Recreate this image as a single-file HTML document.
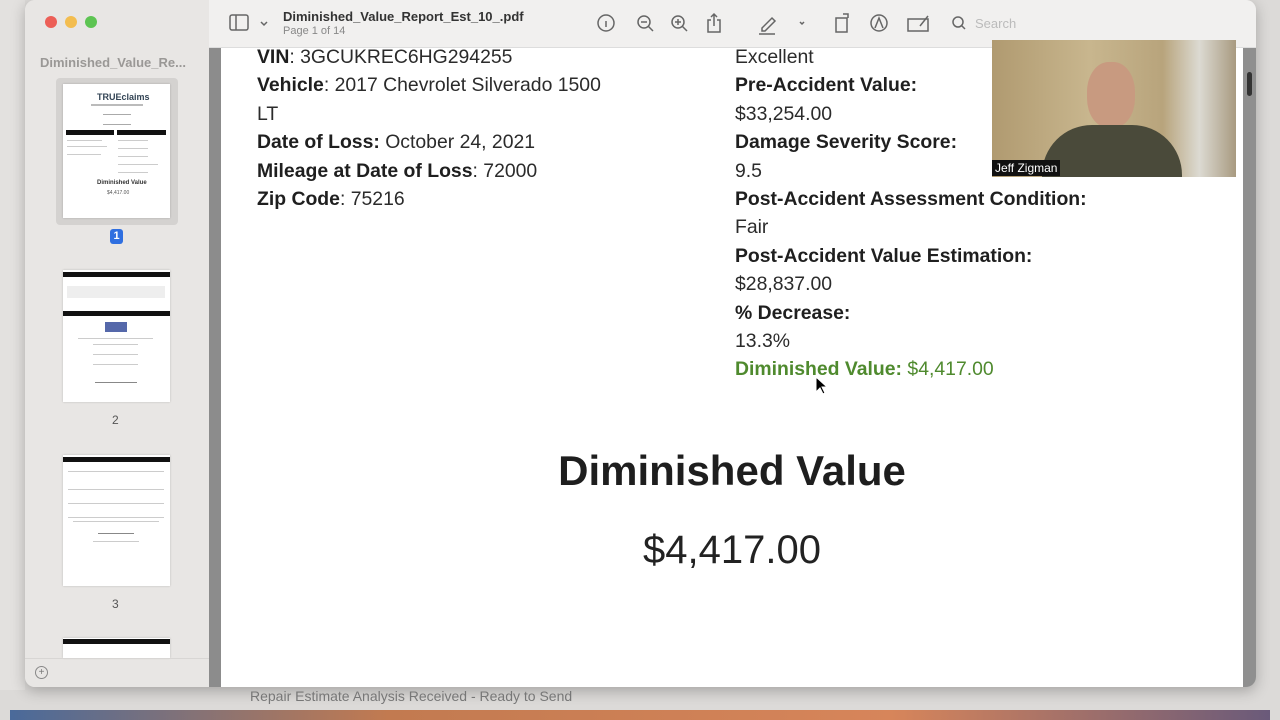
<!DOCTYPE html>
<html><head><meta charset="utf-8"><style>
*{margin:0;padding:0;box-sizing:border-box}
body{width:1280px;height:720px;overflow:hidden;background:#dcdad8;font-family:"Liberation Sans","DejaVu Sans",sans-serif;position:relative}
.abs{position:absolute}
.win{left:25px;top:0;width:1231px;height:687px;background:#e8e6e4;border-radius:10px;overflow:hidden;box-shadow:0 4px 14px rgba(0,0,0,.25)}
.tb{left:184px;top:0;width:1047px;height:48px;background:#f1f0ef;border-bottom:1px solid #ddd}
.side{left:0;top:0;width:184px;height:687px;background:#e8e6e4}
.strip{left:184px;top:48px;width:13px;height:639px;background:#8c8c8c}
.page{left:196px;top:48px;width:1022px;height:639px;background:#fff}
.sb{left:1218px;top:48px;width:13px;height:639px;background:#8f8f8f}
.doc{font-size:19.4px;color:#2b2b2b;line-height:28.4px}
.doc b{color:#1f1f1f}
.th{background:#fff;box-shadow:0 0 2px rgba(0,0,0,.2)}
.bar{background:#111;height:5px;position:absolute}
.ln{background:#ccc;height:1px;position:absolute}
.ic{stroke:#666;fill:none;stroke-width:1.5}
</style></head><body>
<div class="abs" style="left:0;top:0;width:25px;height:690px;background:#e3e1df"></div>
<div class="abs win">
  <div class="abs side">
    <div class="abs" style="left:20px;top:16px;width:12px;height:12px;border-radius:50%;background:#ec5f57"></div>
    <div class="abs" style="left:40px;top:16px;width:12px;height:12px;border-radius:50%;background:#f3bd4f"></div>
    <div class="abs" style="left:60px;top:16px;width:12px;height:12px;border-radius:50%;background:#5dc452"></div>
    <div class="abs" style="left:15px;top:55px;font-size:13px;font-weight:bold;color:#9a9896">Diminished_Value_Re...</div>
    <div class="abs" style="left:31px;top:78px;width:122px;height:147px;background:#d4d2d0;border-radius:4px"></div>
    <div class="abs th" style="left:38px;top:84px;width:107px;height:134px">
      <div class="abs" style="left:34px;top:8px;font-size:9px;font-weight:bold;color:#345">TRUEclaims</div>
      <div class="abs" style="left:28px;top:20px;width:52px;height:2px;background:#bbb"></div>
      <div class="abs" style="left:40px;top:30px;width:28px;height:1px;background:#aaa"></div>
      <div class="abs" style="left:40px;top:40px;width:28px;height:1px;background:#aaa"></div>
      <div class="bar" style="left:3px;top:46px;width:48px"></div><div class="bar" style="left:54px;top:46px;width:49px"></div>
      <div class="ln" style="left:4px;top:56px;width:35px"></div><div class="ln" style="left:4px;top:62px;width:40px"></div><div class="ln" style="left:4px;top:70px;width:34px"></div>
      <div class="ln" style="left:55px;top:56px;width:30px"></div><div class="ln" style="left:55px;top:64px;width:30px"></div><div class="ln" style="left:55px;top:72px;width:30px"></div><div class="ln" style="left:55px;top:80px;width:40px"></div><div class="ln" style="left:55px;top:88px;width:30px"></div>
      <div class="abs" style="left:34px;top:96px;font-size:6px;font-weight:bold;color:#333">Diminished Value</div>
      <div class="abs" style="left:44px;top:106px;font-size:5px;color:#555">$4,417.00</div>
    </div>
    <div class="abs" style="left:85px;top:229px;width:13px;height:15px;background:#2f6fe0;border-radius:3px;color:#fff;font-size:11px;font-weight:bold;text-align:center;line-height:15px">1</div>
    <div class="abs th" style="left:38px;top:270px;width:107px;height:132px">
      <div class="bar" style="left:0;top:2px;width:107px"></div>
      <div class="ln" style="left:4px;top:16px;width:98px;height:12px;background:#eee"></div>
      <div class="bar" style="left:0;top:41px;width:107px"></div>
      <div class="abs" style="left:42px;top:52px;width:22px;height:10px;background:#5568aa"></div>
      <div class="ln" style="left:15px;top:68px;width:75px"></div>
      <div class="ln" style="left:30px;top:74px;width:45px"></div><div class="ln" style="left:30px;top:84px;width:45px"></div><div class="ln" style="left:30px;top:94px;width:45px"></div>
      <div class="ln" style="left:32px;top:112px;width:42px;background:#888"></div>
    </div>
    <div class="abs" style="left:87px;top:413px;font-size:12px;color:#555">2</div>
    <div class="abs th" style="left:38px;top:455px;width:107px;height:131px">
      <div class="bar" style="left:0;top:2px;width:107px"></div>
      <div class="ln" style="left:5px;top:16px;width:96px"></div><div class="ln" style="left:5px;top:34px;width:96px"></div><div class="ln" style="left:5px;top:48px;width:96px"></div><div class="ln" style="left:5px;top:62px;width:96px"></div>
      <div class="ln" style="left:10px;top:66px;width:86px"></div>
      <div class="ln" style="left:35px;top:78px;width:36px;background:#888"></div><div class="ln" style="left:30px;top:86px;width:46px"></div>
    </div>
    <div class="abs" style="left:87px;top:597px;font-size:12px;color:#555">3</div>
    <div class="abs th" style="left:38px;top:638px;width:107px;height:20px"><div class="bar" style="left:0;top:1px;width:107px"></div></div>
    <div class="abs" style="left:0;top:658px;width:184px;height:1px;background:#d8d6d4"></div>
    <div class="abs" style="left:10px;top:666px;width:13px;height:13px;border:1px solid #888;border-radius:50%;font-size:10px;line-height:11px;text-align:center;color:#777">+</div>
  </div>
  <div class="abs tb">
    <svg class="abs" style="left:20px;top:14px" width="44" height="20"><rect class="ic" x="1" y="1" width="18" height="15" rx="2"/><line class="ic" x1="7" y1="1" x2="7" y2="16"/><path class="ic" d="M32 8l3 3 3-3"/></svg>
    <div class="abs" style="left:74px;top:9px;font-size:13px;font-weight:bold;color:#333">Diminished_Value_Report_Est_10_.pdf</div>
    <div class="abs" style="left:74px;top:25px;font-size:11px;color:#888">Page 1 of 14</div>
    <svg class="abs" style="left:385px;top:12px" width="400" height="24">
      <circle class="ic" cx="12" cy="11" r="8"/><line class="ic" x1="12" y1="9" x2="12" y2="15"/>
      <circle class="ic" cx="50" cy="10" r="6"/><line class="ic" x1="54" y1="14" x2="59" y2="19"/><line class="ic" x1="47" y1="10" x2="53" y2="10"/>
      <circle class="ic" cx="84" cy="10" r="6"/><line class="ic" x1="88" y1="14" x2="93" y2="19"/><line class="ic" x1="81" y1="10" x2="87" y2="10"/><line class="ic" x1="84" y1="7" x2="84" y2="13"/>
      <path class="ic" d="M117 8h-3v12h12v-12h-3M120 14v-12M117 5l3-3 3 3"/>
      <path class="ic" d="M168 16l10-10 3 3-10 10h-3zM165 22h16"/><path class="ic" d="M206 10l2 2 2-2"/>
      <rect class="ic" x="242" y="6" width="11" height="14"/><path class="ic" d="M249 2h5v4"/>
      <circle class="ic" cx="285" cy="11" r="8"/><path class="ic" d="M281 16l4-10 4 10"/>
      <rect class="ic" x="314" y="7" width="20" height="12"/><path class="ic" d="M326 14l8-10"/>
      <circle class="ic" cx="364" cy="10" r="5"/><line class="ic" x1="367" y1="13" x2="371" y2="17"/>
    </svg>
    <div class="abs" style="left:766px;top:16px;font-size:13px;color:#bbb">Search</div>
  </div>
  <div class="abs strip"></div>
  <div class="abs page">
    <div class="abs doc" style="left:36px;top:-5px">
      <div><b>VIN</b>: 3GCUKREC6HG294255</div>
      <div><b>Vehicle</b>: 2017 Chevrolet Silverado 1500</div>
      <div>LT</div>
      <div><b>Date of Loss:</b> October 24, 2021</div>
      <div><b>Mileage at Date of Loss</b>: 72000</div>
      <div><b>Zip Code</b>: 75216</div>
    </div>
    <div class="abs doc" style="left:514px;top:-5px">
      <div>Excellent</div>
      <div><b>Pre-Accident Value:</b></div>
      <div>$33,254.00</div>
      <div><b>Damage Severity Score:</b></div>
      <div>9.5</div>
      <div><b>Post-Accident Assessment Condition:</b></div>
      <div>Fair</div>
      <div><b>Post-Accident Value Estimation:</b></div>
      <div>$28,837.00</div>
      <div><b>% Decrease:</b></div>
      <div>13.3%</div>
      <div style="color:#4f8a2e"><b style="color:#4f8a2e">Diminished Value:</b> $4,417.00</div>
    </div>
    <div class="abs" style="left:0;width:1022px;top:399px;text-align:center;font-size:42px;font-weight:bold;color:#1e1e1e">Diminished Value</div>
    <div class="abs" style="left:0;width:1022px;top:480px;text-align:center;font-size:40px;color:#222">$4,417.00</div>
    <svg class="abs" style="left:594px;top:328px" width="14" height="20"><path d="M1 1v15l4-4 3 6 2-1-3-6h5z" fill="#000" stroke="#fff" stroke-width="1"/></svg>
  </div>
  <div class="abs sb"><div class="abs" style="left:4px;top:24px;width:5px;height:24px;background:#333;border-radius:3px"></div></div>
  <div class="abs" style="left:967px;top:40px;width:244px;height:137px;background:linear-gradient(90deg,#b09a70 0%,#c8b68e 40%,#b8a47c 70%,#dcdad2 85%,#a89a80 100%)">
    <div class="abs" style="left:95px;top:22px;width:48px;height:66px;border-radius:45%;background:#c89a80"></div>
    <div class="abs" style="left:50px;top:85px;width:140px;height:52px;border-radius:50px 50px 0 0;background:#4a4a3a"></div>
    <div class="abs" style="left:0;top:120px;background:#111;color:#fff;font-size:12px;padding:1px 3px">Jeff Zigman</div>
  </div>
</div>
<div class="abs" style="left:250px;top:688px;font-size:14px;color:#777">Repair Estimate Analysis Received - Ready to Send</div>
<div class="abs" style="left:10px;top:710px;width:1260px;height:10px;background:linear-gradient(90deg,#4a6a9a,#c27a50 30%,#d7855a 70%,#6a5a7a)"></div>
</body></html>
